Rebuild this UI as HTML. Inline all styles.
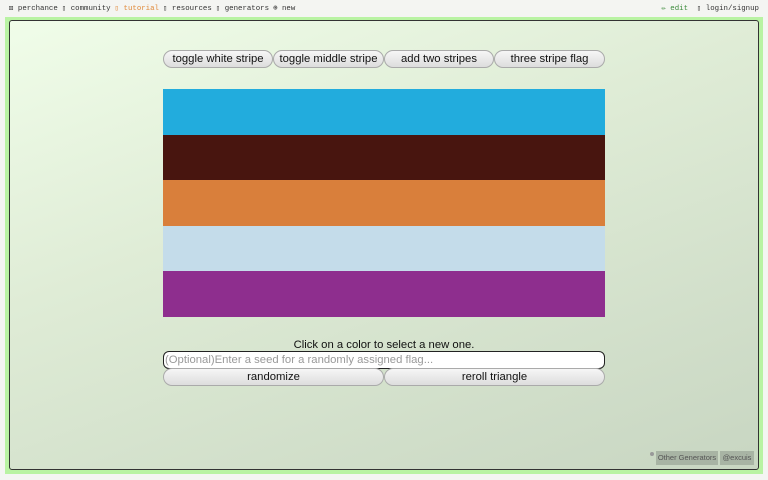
<!DOCTYPE html>
<html><head><style>
body{margin:0;width:768px;height:480px;background:#f4f5f2;font-family:"Liberation Sans",sans-serif;position:relative;overflow:hidden}
.nav{position:absolute;top:3px;left:9px;font-family:"Liberation Mono",monospace;font-size:7.4px;color:#333;white-space:nowrap}
.nav span{margin-right:4px}
.navr{position:absolute;top:3px;right:9px;font-family:"Liberation Mono",monospace;font-size:7.4px;color:#333;white-space:nowrap}
.frame{position:absolute;left:5px;top:17px;width:758px;height:457px;background:#b9f3a3}
.main{position:absolute;left:9px;top:20px;width:748px;height:448px;border:1px solid #333;border-radius:3px;background:linear-gradient(160deg,#f0fde9 0%,#dfecd6 40%,#c8d6c2 100%)}
.btn{position:absolute;height:18px;border:1px solid #aaa;border-radius:9px;background:linear-gradient(#f6f6f6,#ddd);font-size:11.3px;text-align:center;line-height:17px;color:#111;box-sizing:border-box}
.s{position:absolute;left:163px;width:442px}
.tag{position:absolute;top:451px;height:14px;background:#a8b4a4;font-size:7.5px;color:#555;line-height:14px;text-align:center;white-space:nowrap;overflow:hidden}
</style></head><body>
<div class="nav"><span>⚄ perchance</span><span>▯ community</span><span style="color:#e08a3a">▯ tutorial</span><span>▯ resources</span><span>▯ generators</span><span>⊕ new</span></div>
<div class="navr"><span style="color:#3a8a3a">✏ edit</span> &nbsp;▯ login/signup</div>
<div class="frame"></div>
<div class="main"></div>
<div class="btn" style="left:163px;top:50px;width:110px">toggle white stripe</div>
<div class="btn" style="left:273px;top:50px;width:111px">toggle middle stripe</div>
<div class="btn" style="left:384px;top:50px;width:110px">add two stripes</div>
<div class="btn" style="left:494px;top:50px;width:111px">three stripe flag</div>
<div class="s" style="top:89px;height:46px;background:#22acdd"></div>
<div class="s" style="top:135px;height:45px;background:#48150f"></div>
<div class="s" style="top:180px;height:46px;background:#d97f3b"></div>
<div class="s" style="top:226px;height:45px;background:#c4dcea"></div>
<div class="s" style="top:271px;height:46px;background:#8e2e8e"></div>
<div style="position:absolute;left:163px;width:442px;top:339px;text-align:center;font-size:11.3px;color:#111">Click on a color to select a new one.</div>
<div style="position:absolute;left:163px;top:351px;width:442px;height:18px;box-sizing:border-box;border:1px solid #222;border-radius:6px;background:#fff;font-size:11.3px;color:#999;line-height:16px;padding-left:1px">(Optional)Enter a seed for a randomly assigned flag...</div>
<div class="btn" style="left:163px;top:368px;width:221px">randomize</div>
<div class="btn" style="left:384px;top:368px;width:221px">reroll triangle</div>
<div style="position:absolute;left:650px;top:452px;width:4px;height:4px;border-radius:2px;background:#999"></div>
<div class="tag" style="left:656px;width:62px">Other Generators</div>
<div class="tag" style="left:720px;width:34px">@excuis</div>
</body></html>
